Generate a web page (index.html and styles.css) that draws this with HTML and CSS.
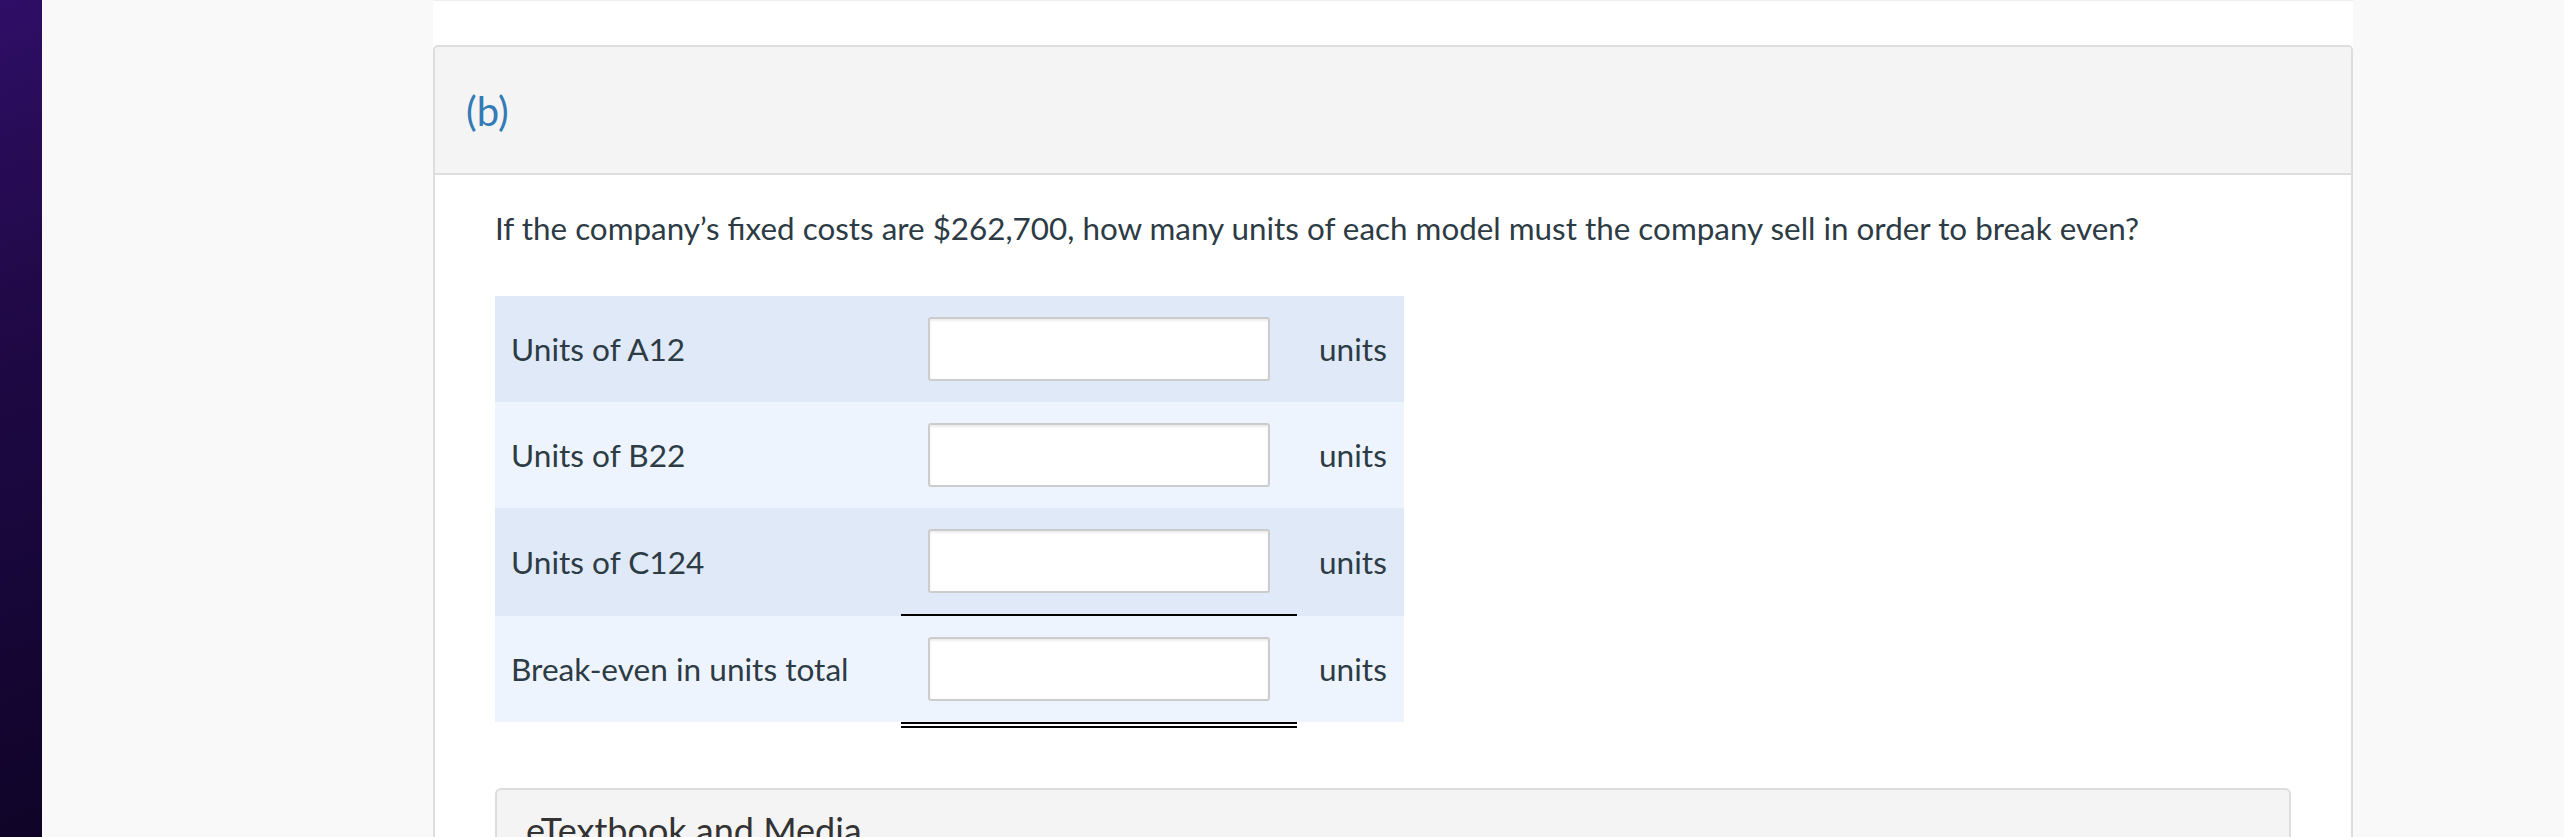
FILE: index.html
```html
<!DOCTYPE html>
<html lang="en">
<head>
<meta charset="utf-8">
<title>Break-even</title>
<link rel="stylesheet" href="styles.css">
</head>
<body>
<div class="page">
  <aside class="sidebar"></aside>
  <div class="gutter"></div>
  <main class="column">
    <section class="card">
      <header class="card-header"><span class="part">(b)</span></header>
      <div class="card-body">
        <p class="question">If the company’s fixed costs are $262,700, how many units of each model must the company sell in order to break even?</p>
        <div class="answer-table">
          <div class="row odd">
            <div class="cell-label">Units of A12</div>
            <div class="cell-input"><input class="box" type="text"></div>
            <div class="cell-units">units</div>
          </div>
          <div class="row even">
            <div class="cell-label">Units of B22</div>
            <div class="cell-input"><input class="box" type="text"></div>
            <div class="cell-units">units</div>
          </div>
          <div class="row odd">
            <div class="cell-label">Units of C124</div>
            <div class="cell-input single"><input class="box" type="text"></div>
            <div class="cell-units">units</div>
          </div>
          <div class="row even">
            <div class="cell-label">Break-even in units total</div>
            <div class="cell-input double"><input class="box" type="text"></div>
            <div class="cell-units">units</div>
          </div>
        </div>
        <div class="media">
          <div class="media-title">eTextbook and Media</div>
        </div>
      </div>
    </section>
  </main>
</div>
</body>
</html>
```

FILE: styles.css
```css
html, body {
  margin: 0;
  padding: 0;
}
body {
  background: #f9f9f9;
  font-family: Lato, "Open Sans", "Liberation Sans", sans-serif;
  color: #2d3b45;
  height: 837px;
  overflow: hidden;
}
.page {
  display: flex;
  height: 837px;
}
.sidebar {
  width: 42px;
  flex: none;
  background: linear-gradient(160deg, #2e0e66 0%, #210948 35%, #170638 70%, #0f0427 100%);
}
.gutter {
  width: 391px;
  flex: none;
}
.column {
  width: 1920px;
  flex: none;
  background: #fff;
  padding-top: 44px;
  box-sizing: border-box;
  border-top: 2px solid #eeeeee;
  margin-top: -1px;
}
.card {
  border: 2px solid #dddddd;
  border-bottom: none;
  border-radius: 5px 5px 0 0;
  background: #fff;
  height: 900px;
}
.card-header {
  height: 126px;
  background: #f4f4f4;
  border-bottom: 2px solid #dddddd;
  border-radius: 4px 4px 0 0;
  display: flex;
  align-items: center;
  padding-left: 31px;
}
.part {
  font-size: 40px;
  color: #337ab7;
  margin-top: 2px;
}
.card-body {
  padding: 30px 60px 0 60px;
}
.question {
  margin: 0 0 44px 0;
  font-size: 31.4px;
  line-height: 1.5;
}
.answer-table {
  width: 909px;
  font-size: 31.6px;
}
.row {
  display: flex;
}
.row.odd { background: #dfe9f7; }
.row.even { background: #eef4fd; }
.cell-label {
  width: 406px;
  box-sizing: border-box;
  padding-left: 16px;
  display: flex;
  align-items: center;
  padding-bottom: 1px;
}
.cell-input {
  width: 396px;
  box-sizing: border-box;
  padding: 21px 27px;
}
.cell-input.single {
  border-bottom: 2px solid #000;
}
.cell-input.double {
  border-bottom: 6px double #000;
  margin-bottom: -6px;
}
.cell-units {
  width: 107px;
  box-sizing: border-box;
  padding-left: 22px;
  display: flex;
  align-items: center;
  padding-bottom: 1px;
}
.box {
  display: block;
  width: 342px;
  height: 64px;
  box-sizing: border-box;
  margin: 0;
  border: 2px solid #cccccc;
  border-radius: 3px;
  background: #fff;
  box-shadow: inset 0 2px 2px rgba(0, 0, 0, 0.075);
  font: inherit;
}
.media {
  margin-top: 66px;
  border: 2px solid #dddddd;
  border-radius: 6px;
  background: #f4f4f4;
  height: 120px;
  padding: 18px 29px 0;
}
.media-title {
  font-size: 36px;
  color: #333;
}
```
